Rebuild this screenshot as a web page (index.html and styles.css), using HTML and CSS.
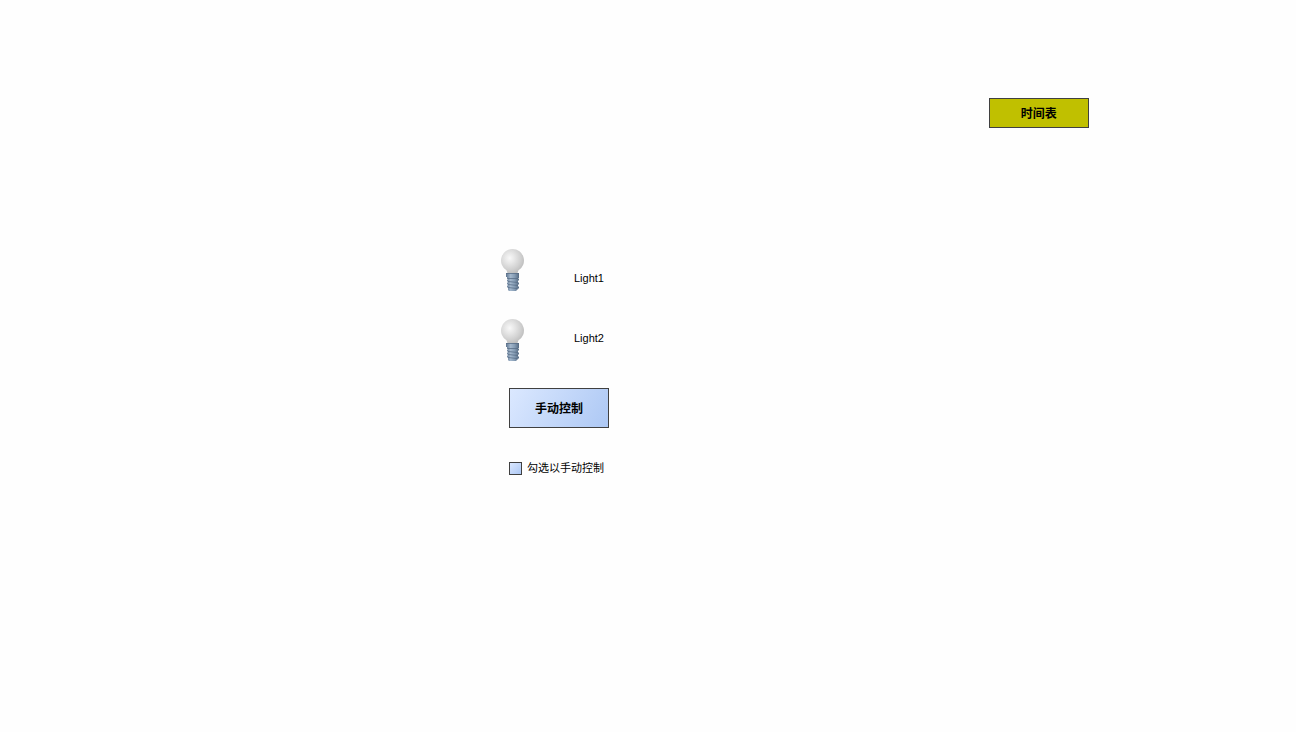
FILE: index.html
```
<!DOCTYPE html>
<html lang="zh-CN">
<head>
  <meta charset="UTF-8">
  <meta name="viewport" content="width=device-width, initial-scale=1.0">
  <title>Light Control</title>
  <link rel="stylesheet" href="styles.css">
</head>
<body>
  <header class="toolbar">
    <button type="button" class="btn schedule-btn">时间表</button>
  </header>

  <main class="panel">
    <div class="lights">
      <div class="lamps">
        <svg class="lamp" viewBox="0 0 24 44" aria-hidden="true">
          <defs>
            <radialGradient id="glass" cx="0.38" cy="0.38" r="0.64">
              <stop offset="0" stop-color="#f8f8f8"/>
              <stop offset="0.35" stop-color="#e6e6e6"/>
              <stop offset="0.75" stop-color="#d0d0d0"/>
              <stop offset="1" stop-color="#c0c0c0"/>
            </radialGradient>
            <linearGradient id="metal" x1="0" y1="0" x2="1" y2="0">
              <stop offset="0" stop-color="#5f7690"/>
              <stop offset="0.35" stop-color="#a3b7cc"/>
              <stop offset="0.65" stop-color="#869db5"/>
              <stop offset="1" stop-color="#566b83"/>
            </linearGradient>
          </defs>
          <path d="M6 24h13v5h-1l1 1v1l-1 1v1l1 1v1l-1 1v1l1 1v1l-2 2-1 1H9l-1-1v-2l-1-1v-1l1-1-1-1v-1l1-1-1-1v-1l1-1-1-1v-1H6z" fill="url(#metal)"/>
          <path d="M6 24.5h13M7 29.5h11M8 32.5l10 1M8 35.5l10 1M8 38.5l9 1" fill="none" stroke="#556b84" stroke-opacity="0.75" stroke-width="1"/>
          <path d="M12.500 0a11.500 11.500 0 0 1 6 21.300L17.500 24h-10l-1-2.700A11.500 11.500 0 0 1 12.500 0z" fill="url(#glass)"/>
        </svg>
        <svg class="lamp" viewBox="0 0 24 44" aria-hidden="true">
          <path d="M6 24h13v5h-1l1 1v1l-1 1v1l1 1v1l-1 1v1l1 1v1l-2 2-1 1H9l-1-1v-2l-1-1v-1l1-1-1-1v-1l1-1-1-1v-1l1-1-1-1v-1H6z" fill="url(#metal)"/>
          <path d="M6 24.5h13M7 29.5h11M8 32.5l10 1M8 35.5l10 1M8 38.5l9 1" fill="none" stroke="#556b84" stroke-opacity="0.75" stroke-width="1"/>
          <path d="M12.500 0a11.500 11.500 0 0 1 6 21.300L17.500 24h-10l-1-2.700A11.500 11.500 0 0 1 12.500 0z" fill="url(#glass)"/>
        </svg>
      </div>
      <div class="lamp-names">
        <span>Light1</span>
        <span>Light2</span>
      </div>
    </div>

    <div class="manual">
      <button type="button" class="btn manual-btn">手动控制</button>
      <label class="manual-check" for="manualCheck">
        <input type="checkbox" id="manualCheck">
        <span>勾选以手动控制</span>
      </label>
    </div>
  </main>
</body>
</html>
```
FILE: styles.css
```
body {
  margin: 0;
  background-color: #fefefe;
  color: #000;
  font-family: "Liberation Sans", "Noto Sans CJK SC", sans-serif;
  font-size: 11px;
  line-height: 16px;
}

.toolbar {
  display: flex;
  justify-content: flex-end;
  padding: 98px 16% 0 0;
}

.btn {
  width: 100px;
  padding: 2px 0 0;
  border: 1px solid #404040;
  border-radius: 0;
  color: #000;
  font-family: inherit;
  font-size: 12px;
  font-weight: bold;
  line-height: 16px;
  cursor: pointer;
}

.schedule-btn {
  height: 30px;
  background-color: #c0c000;
}

.panel {
  padding: 121px 0 40px 500px;
}

.lights {
  display: flex;
  gap: 50px;
}

.lamps {
  display: flex;
  flex-direction: column;
  gap: 26px;
}

.lamp {
  display: block;
  width: 24px;
  height: 44px;
}

.lamp-names {
  display: flex;
  flex-direction: column;
  gap: 44px;
  padding-top: 21px;
}

.manual {
  display: flex;
  flex-direction: column;
  align-items: flex-start;
  gap: 32px;
  margin-top: 25px;
  padding-left: 9px;
}

.manual-btn {
  height: 40px;
  background: linear-gradient(120deg, #dbe8ff, #adc8f4);
}

.manual-check {
  display: flex;
  align-items: center;
  gap: 5px;
  cursor: pointer;
}

.manual-check input {
  appearance: none;
  width: 13px;
  height: 13px;
  margin: 0;
  border: 1px solid #404040;
  background: linear-gradient(135deg, #dbe8ff, #adc8f4);
}

.manual-check input:checked {
  background: #404040;
}
```
